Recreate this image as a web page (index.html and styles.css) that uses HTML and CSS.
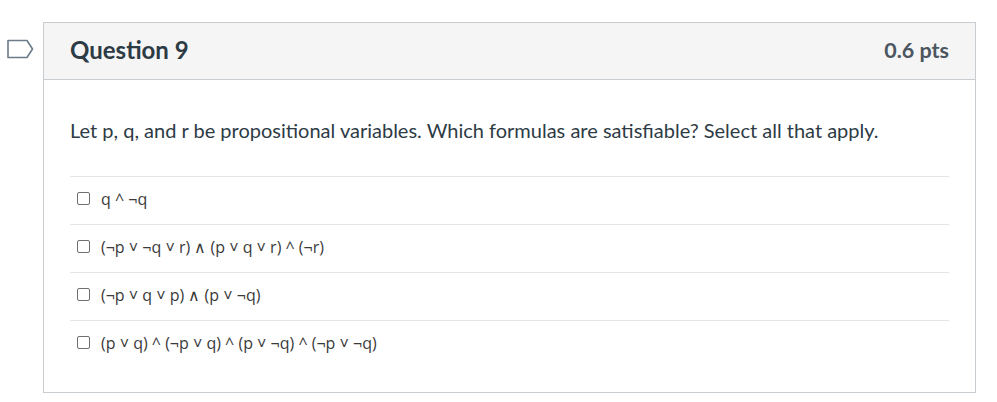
FILE: index.html
```html
<!DOCTYPE html>
<html>
<head>
<meta charset="utf-8">
<link rel="stylesheet" href="styles.css">
</head>
<body>
<div class="page">
  <div class="flag-col">
    <svg class="flag" width="28" height="20" viewBox="0 0 28 20">
      <path d="M1 1.5 H20 L25.5 10 L20 18.5 H1 Z" fill="none" stroke="#6b7b8a" stroke-width="1.6" stroke-linejoin="round"/>
    </svg>
  </div>
  <div class="card">
    <div class="header">
      <div class="title">Question 9</div>
      <div class="pts">0.6 pts</div>
    </div>
    <div class="body">
      <div class="qtext">Let p, q, and r be propositional variables. Which formulas are satisfiable? Select all that apply.</div>
      <div class="answers">
        <label class="answer"><span class="box"></span><span class="atext">q ^ ¬q</span></label>
        <label class="answer"><span class="box"></span><span class="atext">(¬p ˅ ¬q ˅ r) ∧ (p ˅ q ˅ r) ^ (¬r)</span></label>
        <label class="answer"><span class="box"></span><span class="atext">(¬p ˅ q ˅ p) ∧ (p ˅ ¬q)</span></label>
        <label class="answer"><span class="box"></span><span class="atext">(p ˅ q) ^ (¬p ˅ q) ^ (p ˅ ¬q) ^ (¬p ˅ ¬q)</span></label>
      </div>
    </div>
  </div>
</div>
</body>
</html>
```

FILE: styles.css
```css
html, body {
  margin: 0;
  padding: 0;
  background: #ffffff;
}
.page {
  display: flex;
  padding-top: 22px;
}
.flag-col {
  width: 43px;
  flex: none;
  padding-top: 17px;
  padding-left: 7px;
  box-sizing: border-box;
}
.flag {
  display: block;
}
.card {
  width: 933px;
  height: 371px;
  box-sizing: border-box;
  border: 1px solid #c7cdd1;
}
.header {
  height: 57px;
  box-sizing: border-box;
  background: #f5f5f5;
  border-bottom: 1px solid #c7cdd1;
  display: flex;
  align-items: center;
  justify-content: space-between;
  padding: 0 26px 3px 26px;
  font-family: Lato, "Open Sans", sans-serif;
  font-weight: 700;
  color: #2d3b45;
}
.title {
  font-size: 24px;
}
.pts {
  font-size: 21.5px;
  color: #4b5660;
}
.body {
  padding: 38px 26px 0 26px;
}
.qtext {
  font-family: Lato, sans-serif;
  font-size: 20px;
  line-height: 24px;
  color: #2d3b45;
}
.answers {
  margin-top: 34px;
}
.answer {
  display: flex;
  align-items: center;
  height: 48px;
  box-sizing: border-box;
  border-top: 1px solid #e2e4e6;
  padding-left: 7px;
  padding-bottom: 4px;
}
.box {
  width: 11px;
  height: 11px;
  border: 1px solid #6f6f6f;
  border-radius: 2px;
  flex: none;
}
.atext {
  margin-left: 11px;
  font-family: "Open Sans", sans-serif;
  font-size: 16px;
  color: #3a3a3a;
}
```
